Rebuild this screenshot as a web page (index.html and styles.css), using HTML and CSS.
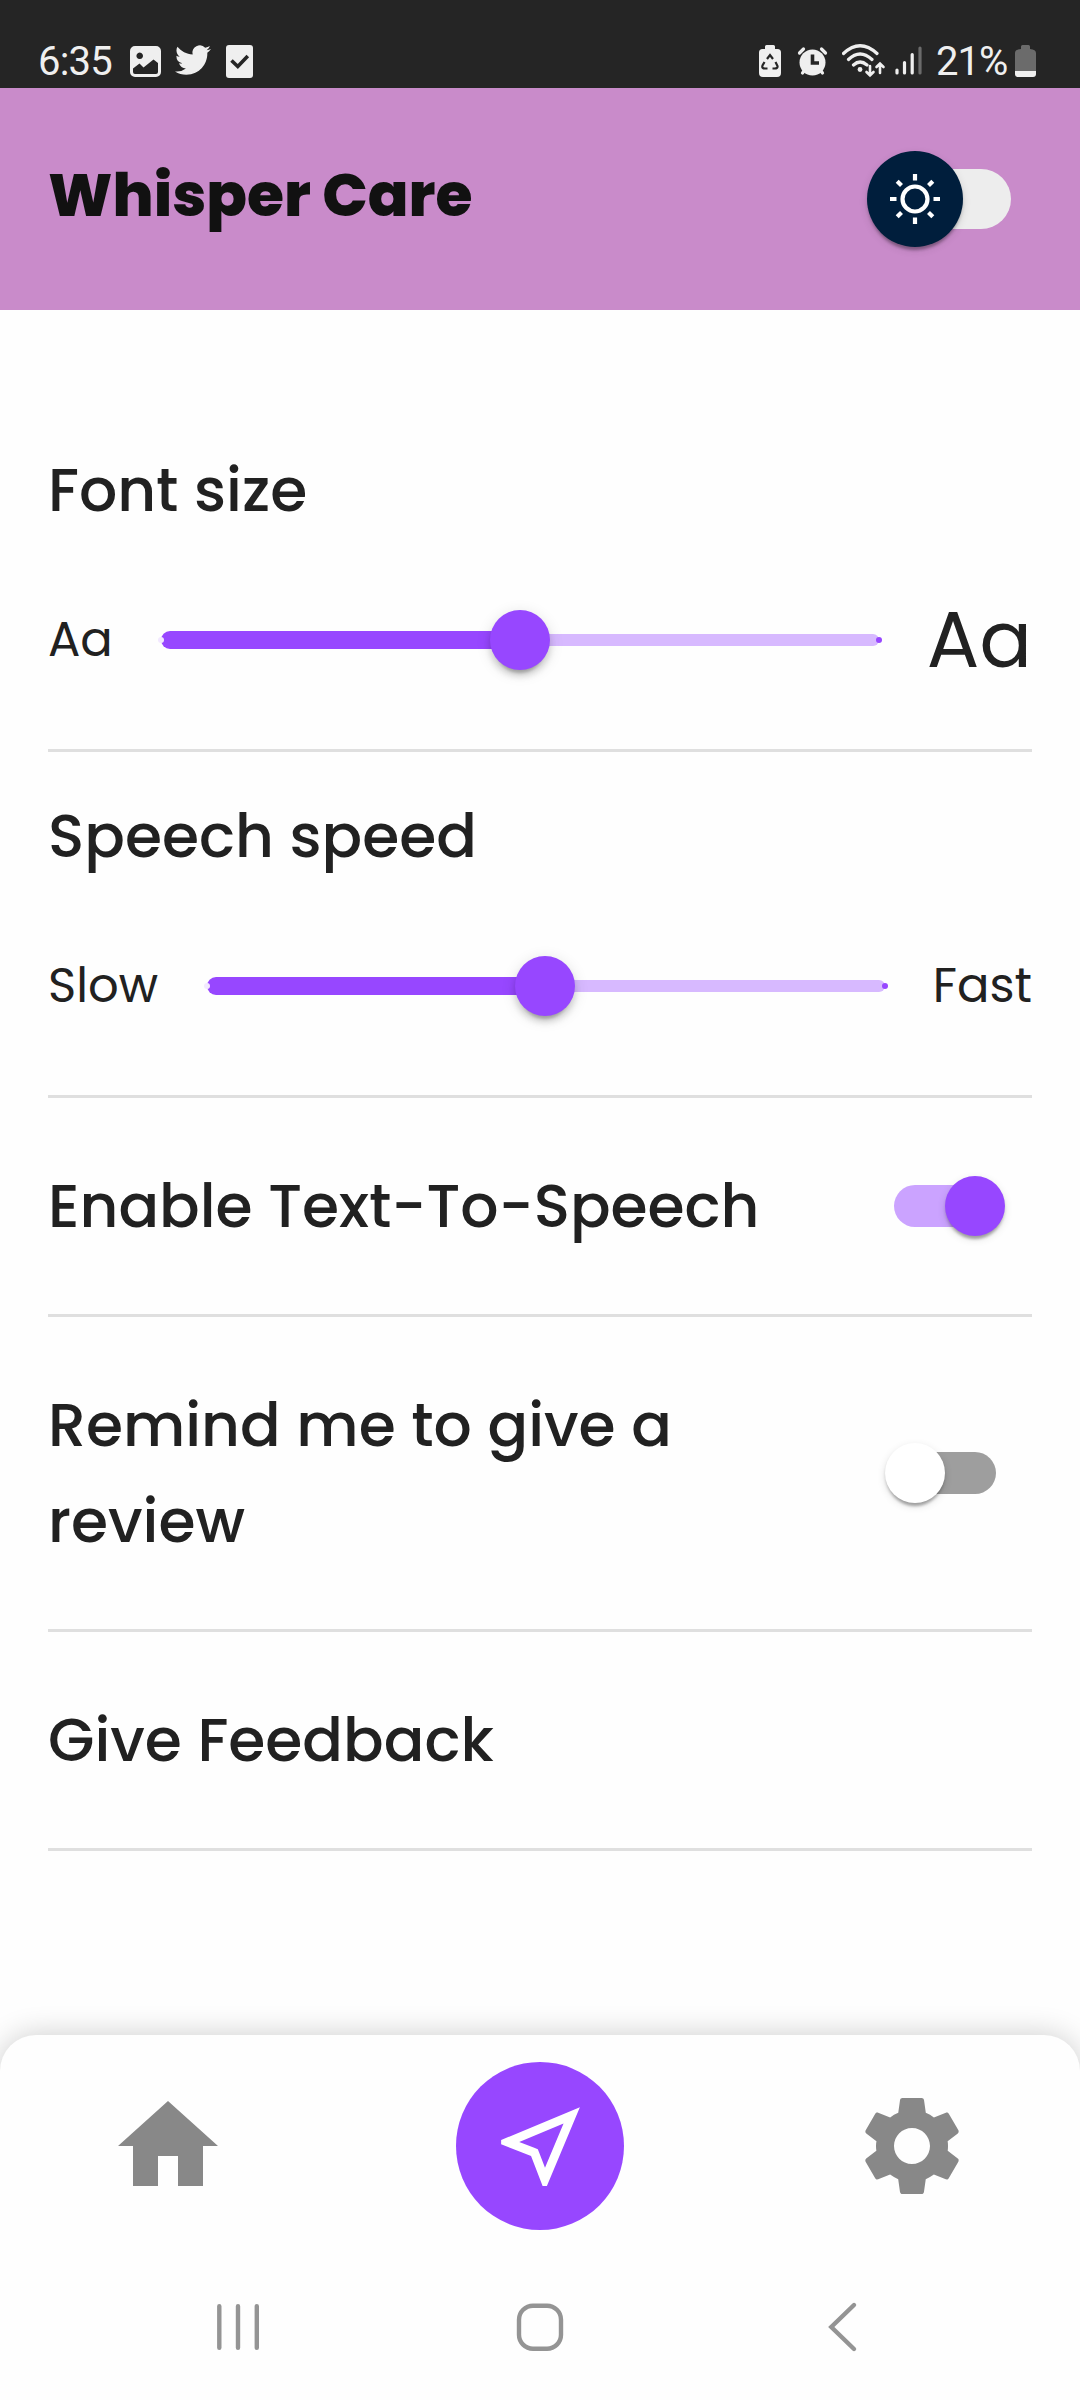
FILE: index.html
```html
<!DOCTYPE html>
<html lang="en">
<head>
<meta charset="utf-8">
<title>Whisper Care</title>
<link rel="stylesheet" href="styles.css">
</head>
<body>
<div class="status">
  <span class="status-text time">6:35</span>
  <svg class="ic-image" viewBox="130 42 31 40"><path fill-rule="evenodd" d="M135 46h21a5 5 0 0 1 5 5v21a5 5 0 0 1-5 5h-21a5 5 0 0 1-5-5V51a5 5 0 0 1 5-5zM139.700 52.500a3.300 3.300 0 1 0 .01 0zM133 68.500V72q0 2 2 2h21q2 0 2-2v-9l-4.500-3.500L143.500 67.500 139.500 63.500z"/></svg>
  <svg class="ic-bird" viewBox="0 0 24 26.500"><path d="M23.950 4.570a10 10 0 0 1-2.820.77 4.960 4.960 0 0 0 2.160-2.720c-.95.55-2 .95-3.130 1.180a4.920 4.920 0 0 0-8.380 4.480C7.690 8.090 4.070 6.130 1.640 3.160a4.820 4.820 0 0 0-.67 2.480c0 1.710.87 3.210 2.190 4.100a4.900 4.900 0 0 1-2.230-.62v.06a4.920 4.920 0 0 0 3.950 4.830 5 5 0 0 1-2.210.08 4.940 4.940 0 0 0 4.600 3.420A9.870 9.870 0 0 1 0 19.540a13.990 13.990 0 0 0 7.550 2.210c9.050 0 14-7.500 14-13.980 0-.21 0-.42-.02-.63a9.940 9.940 0 0 0 2.460-2.550z"/></svg>
  <svg class="ic-check" viewBox="226 42 27 40"><rect x="226" y="45" width="27" height="33" rx="3"/><path class="cut" d="M231.500 60.500l6.300 6 10-10.500"/></svg>
  <svg class="ic-saver" viewBox="759 42 22 40"><path d="M765 48v-1.500q0-1.500 1.500-1.500h7q1.500 0 1.500 1.500V49h2.500q3.500 0 3.500 3.500V73q0 4-4 4h-14q-4 0-4-4V52.500q0-3.500 3.500-3.500h2.500z"/><path class="cut thin" d="M767 59l3-4 3 4M775.500 62l2 4q.5 2.500-3 2.500h-2M767.500 68.500h-2.500q-3.500 0-2.500-3l2-3.500"/></svg>
  <svg class="ic-alarm" viewBox="797 42 31 40"><circle cx="812.500" cy="62.500" r="13"/><path class="line" d="M799.500 53l4-4M825.500 53l-4-4M802.500 73l3-4M822.500 73l-3-4"/><path class="cut" d="M812.500 54.500v8.500h6.500"/></svg>
  <svg class="ic-wifi" viewBox="842 42 44 40"><path class="line" d="M843.500 53.500q16.500-15.500 33.500 0M848.500 59.500q11.500-11 23.500 0M853.500 65q6.500-6 13.500 0"/><circle cx="860" cy="69.500" r="2.400"/><path class="line arrow" d="M870 66v9.500M866.500 72l3.500 3.500 3.500-3.500M880 73V64M876.500 67l3.500-3.500 3.500 3.500"/></svg>
  <svg class="ic-signal" viewBox="895 42 27 40"><path class="line" d="M897 70v3M904.500 62.500v10.500M912.200 54.500v18.500"/><path class="line dim" d="M920 48v25"/></svg>
  <span class="status-text percent">21%</span>
  <svg class="ic-battery" viewBox="1015 42 21 40"><path class="faded" d="M1021 49v-2.500q0-1.500 1.500-1.500h6q1.500 0 1.500 1.500V49q6 .5 6 4v18h-21V53q0-3.500 6-4z"/><path d="M1015 71h21v3q0 3-3 3h-15q-3 0-3-3z"/></svg>
</div>

<header class="header">
  <h1 class="brand">Whisper Care</h1>
  <div class="theme-switch">
    <div class="theme-thumb">
      <svg viewBox="-30 -30 60 60" width="60" height="60"><circle r="12.500"/><path d="M0-25v6.500M0 25v-6.500M-25 0h6.500M25 0h-6.500M-17.800-17.800l4.300 4.300M17.800-17.800l-4.300 4.300M-17.800 17.800l4.300-4.300M17.800 17.800l-4.300-4.300"/></svg>
    </div>
  </div>
</header>

<main class="settings">
  <section class="range-row">
    <h2 class="label">Font size</h2>
    <div class="range">
      <span class="small w-aa">Aa</span>
      <div class="slider slider-font"><div class="rail"></div><div class="fill"></div><i class="mark start"></i><i class="mark end"></i><div class="knob"></div></div>
      <span class="large">Aa</span>
    </div>
  </section>
  <section class="range-row">
    <h2 class="label">Speech speed</h2>
    <div class="range">
      <span class="small w-slow">Slow</span>
      <div class="slider slider-speed"><div class="rail"></div><div class="fill"></div><i class="mark start"></i><i class="mark end"></i><div class="knob"></div></div>
      <span class="small">Fast</span>
    </div>
  </section>
  <section class="row">
    <h2 class="label">Enable Text-To-Speech</h2>
    <div class="switch on"><div class="thumb"></div></div>
  </section>
  <section class="row">
    <h2 class="label">Remind me to give a<br>review</h2>
    <div class="switch"><div class="thumb"></div></div>
  </section>
  <section class="row">
    <h2 class="label">Give Feedback</h2>
  </section>
</main>

<footer class="dock">
  <nav class="tabs">
    <svg class="tab" viewBox="0 0 24 24"><path d="M10 20v-6h4v6h5v-8h3L12 3 2 12h3v8z"/></svg>
    <div class="tab-main"><svg viewBox="0 0 24 24"><path d="M17.270 6.730l-4.240 10.130-1.320-3.420-.32-.83-.82-.32-3.430-1.330 10.130-4.230M21 3L3 10.530v.98l6.840 2.650L12.480 21h.98L21 3z"/></svg></div>
    <svg class="tab" viewBox="0 0 24 24"><path d="M19.140 12.940c.04-.3.060-.61.060-.94 0-.32-.02-.64-.07-.94l2.030-1.580c.18-.14.230-.41.120-.61l-1.920-3.320c-.12-.22-.37-.29-.59-.22l-2.390.96c-.5-.38-1.030-.7-1.620-.94l-.36-2.540c-.04-.24-.24-.41-.48-.41h-3.840c-.24 0-.43.170-.47.410l-.36 2.540c-.59.240-1.130.570-1.620.940l-2.390-.96c-.22-.08-.47 0-.59.220L2.740 8.870c-.12.210-.08.470.12.610l2.030 1.580c-.05.300-.09.630-.09.940s.02.640.07.940l-2.030 1.580c-.18.140-.23.410-.12.610l1.920 3.320c.12.220.37.290.59.220l2.390-.96c.5.380 1.030.7 1.620.940l.36 2.540c.05.240.24.410.48.410h3.840c.24 0 .44-.17.470-.41l.36-2.540c.59-.24 1.130-.56 1.620-.94l2.390.96c.22.080.47 0 .59-.22l1.920-3.320c.12-.22.070-.47-.12-.61l-2.010-1.580zM12 15.600c-1.980 0-3.600-1.620-3.600-3.600s1.620-3.600 3.600-3.600 3.600 1.620 3.600 3.600-1.620 3.600-3.600 3.600z"/></svg>
  </nav>
  <div class="system">
    <svg viewBox="-30 -30 60 60"><path d="M-18.700-20.800v41.600M0-20.800v41.600M18.800-20.800v41.600"/></svg>
    <svg viewBox="-30 -30 60 60"><rect x="-21" y="-21.300" width="42" height="43" rx="14"/></svg>
    <svg viewBox="-30 -30 60 60"><path d="M12-22L-10.700 0 12 22"/></svg>
  </div>
</footer>
</body>
</html>
```
FILE: styles.css
```css
* { box-sizing: border-box; }
body {
  margin: 0;
  width: 1080px;
  height: 2400px;
  overflow: hidden;
  display: flex;
  flex-direction: column;
  background: #fefefe;
  color: #212121;
  font-family: Poppins, Inter, "Open Sans", sans-serif;
}
h1, h2 { margin: 0; }
svg { display: block; flex: none; }

/* Status bar */
.status {
  height: 88px;
  padding: 0 44px 6px 38px;
  display: flex;
  align-items: flex-end;
  background: #252525;
  fill: #efefef;
}
.status svg { height: 40px; }
.status-text {
  font: 400 40px/40px Roboto, sans-serif;
  color: #efefef;
  white-space: nowrap;
}
.time { width: 92px; letter-spacing: -.8px; }
.percent { width: 79px; margin-left: 14px; letter-spacing: -1px; }
.ic-image { width: 31px; }
.ic-bird { width: 36px; margin-left: 14px; }
.ic-check { width: 27px; margin-left: 15px; }
.ic-saver { width: 22px; margin-left: auto; }
.ic-alarm { width: 31px; margin-left: 16px; }
.ic-wifi { width: 44px; margin-left: 14px; }
.ic-signal { width: 27px; margin-left: 9px; }
.ic-battery { width: 21px; }
.cut { fill: none; stroke: #252525; stroke-width: 3.6; }
.thin { stroke-width: 2.2; }
.line { fill: none; stroke: #efefef; stroke-width: 3.2; stroke-linecap: round; }
.arrow { stroke-width: 2.6; }
.dim { stroke: #6b6b6b; }
.faded { fill: #6b6b6b; }

/* App header */
.header {
  height: 222px;
  padding: 0 69px 0 48px;
  display: flex;
  align-items: center;
  justify-content: space-between;
  background: #c98bca;
}
.brand {
  font-size: 60px;
  line-height: 90px;
  font-weight: 800;
  color: #111;
  padding-bottom: 8px;
  white-space: nowrap;
}
.theme-switch {
  width: 120px;
  height: 60px;
  display: flex;
  align-items: center;
  border-radius: 30px;
  background: #ededed;
}
.theme-thumb {
  width: 96px;
  height: 96px;
  flex: none;
  margin-left: -24px;
  display: grid;
  place-items: center;
  border-radius: 50%;
  background: #001e3c;
  box-shadow: 0 6px 3px -3px rgba(0,0,0,.2), 0 3px 3px rgba(0,0,0,.14), 0 3px 9px rgba(0,0,0,.12);
}
.theme-thumb svg { fill: none; stroke: #fff; stroke-width: 4.2; }

/* Settings list */
.settings { padding: 96px 48px 0; }
.label {
  font-size: 60px;
  font-weight: 500;
  line-height: 96px;
  white-space: nowrap;
}
.range-row { height: 346px; padding-top: 36px; border-bottom: 3px solid #dfdfdf; }
.range { height: 204px; display: flex; align-items: center; justify-content: space-between; }
.small { font-size: 48px; line-height: 72px; white-space: nowrap; }
.large { font-size: 78px; line-height: 96px; white-space: nowrap; }
.row {
  padding: 60px 36px 60px 0;
  display: flex;
  align-items: center;
  justify-content: space-between;
  border-bottom: 3px solid #dfdfdf;
}

/* Slider: one grid cell, pieces stacked in it */
.slider { display: grid; align-items: center; height: 60px; flex: none; }
.slider > * { grid-area: 1 / 1; }
.slider-font { width: 718px; margin-right: auto; --value: 359px; }
.slider-speed { width: 678px; margin-right: auto; --value: 338px; }
.w-aa { width: 113px; }
.w-slow { width: 159px; }
.rail { height: 12px; border-radius: 6px; background: #d7b9ff; }
.fill { width: var(--value); height: 18px; border-radius: 9px; background: #9747ff; }
.mark { width: 6px; height: 6px; border-radius: 50%; }
.start { margin-left: -3px; background: #f2e8ff; }
.end { justify-self: end; margin-right: -3px; background: #9747ff; }
.knob {
  width: 60px;
  height: 60px;
  margin-left: calc(var(--value) - 30px);
  border-radius: 50%;
  background: #9747ff;
  box-shadow: 0 9px 3px -6px rgba(0,0,0,.2), 0 6px 6px rgba(0,0,0,.14), 0 3px 15px rgba(0,0,0,.12);
}

/* Switches */
.switch {
  width: 102px;
  height: 42px;
  display: flex;
  align-items: center;
  border-radius: 21px;
  background: #9e9e9e;
}
.thumb {
  width: 60px;
  height: 60px;
  flex: none;
  margin-left: -9px;
  border-radius: 50%;
  background: #fff;
  box-shadow: 0 6px 3px -3px rgba(0,0,0,.2), 0 3px 3px rgba(0,0,0,.14), 0 3px 9px rgba(0,0,0,.12);
}
.on { background: #cba3ff; }
.on .thumb { margin-left: 51px; background: #9747ff; }

/* Bottom dock */
.dock {
  height: 365px;
  margin-top: auto;
  border-radius: 36px 36px 0 0;
  background: #fefefe;
  box-shadow: 0 0 30px rgba(0,0,0,.2);
}
.tabs {
  height: 222px;
  padding: 0 108px;
  display: flex;
  align-items: center;
  justify-content: space-between;
}
.tab { width: 120px; height: 120px; fill: #888; }
.tab-main {
  width: 168px;
  height: 168px;
  display: grid;
  place-items: center;
  border-radius: 50%;
  background: #9747ff;
}
.tab-main svg { width: 105px; height: 105px; fill: #fff; }
.system {
  padding: 40px 208px;
  display: flex;
  justify-content: space-between;
}
.system svg { width: 60px; height: 60px; fill: none; stroke: #949494; stroke-width: 4.4; stroke-linecap: round; }
```
